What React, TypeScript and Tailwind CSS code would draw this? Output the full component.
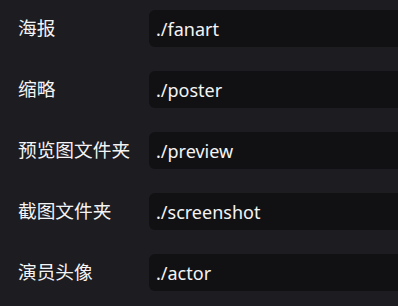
import React from "react";

const rows = [
  { label: "海报", value: "./fanart" },
  { label: "缩略", value: "./poster" },
  { label: "预览图文件夹", value: "./preview" },
  { label: "截图文件夹", value: "./screenshot" },
  { label: "演员头像", value: "./actor" },
];

export default function App() {
  return (
    <div
      className="w-[398px] h-[306px] overflow-hidden bg-[#1c1c21] text-[#f4f4f5]"
      style={{ fontFamily: '"Noto Sans", "Noto Sans CJK SC", sans-serif' }}
    >
      <div className="flex flex-col gap-[24px] pt-[10px] pl-[18px]">
        {rows.map((r) => (
          <div key={r.label} className="flex items-center h-[37px]">
            <div className="w-[131px] shrink-0 text-[18.7px] leading-none">{r.label}</div>
            <div className="flex-1 h-[37px] rounded-l-[6px] bg-[#111113] flex items-center pl-[7px] text-[18px] leading-none">
              {r.value}
            </div>
          </div>
        ))}
      </div>
    </div>
  );
}
